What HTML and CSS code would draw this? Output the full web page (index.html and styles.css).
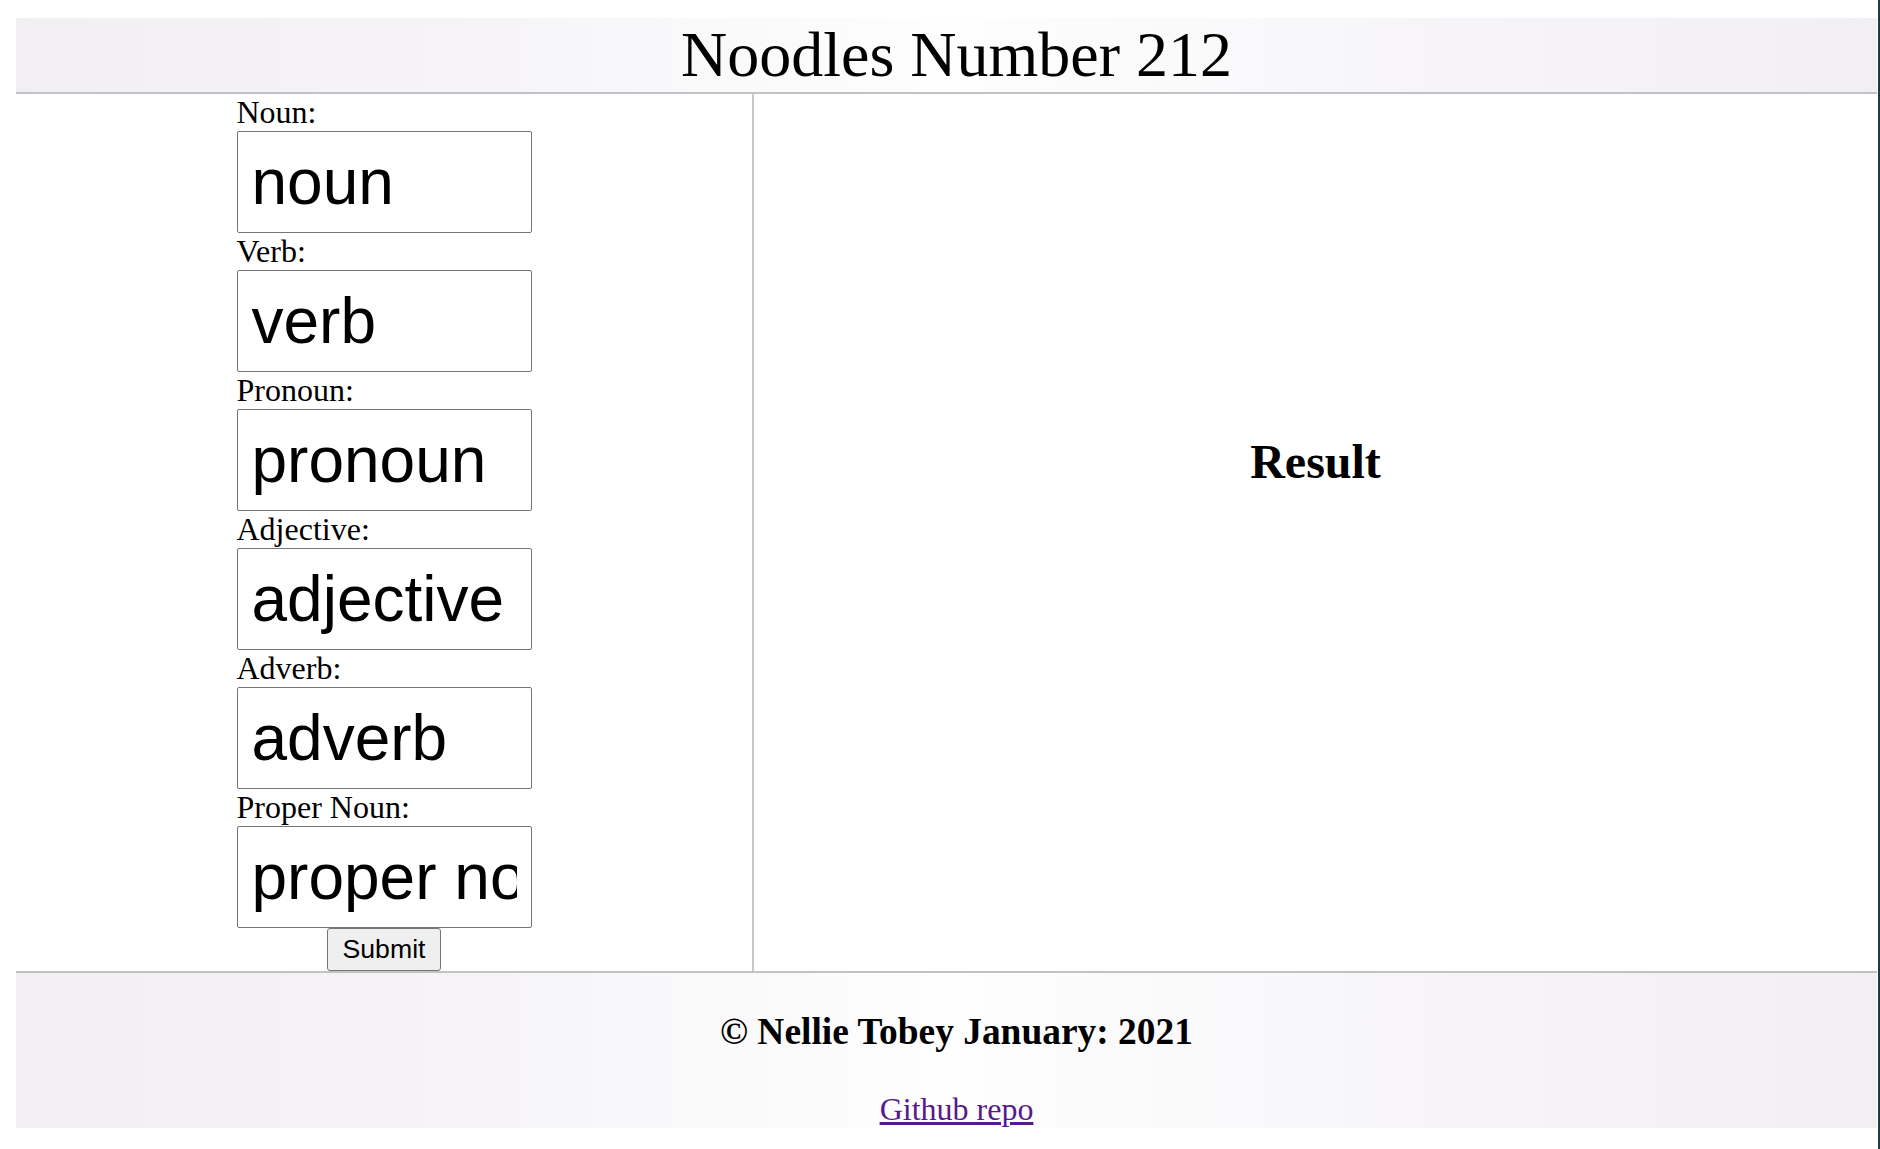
FILE: index.html
```html
<!DOCTYPE html>
<html lang="en">
<head>
<meta charset="utf-8">
<title>Noodles Number 212</title>
<link rel="stylesheet" href="styles.css">
</head>
<body>
<header class="site-header">
  <h1 class="title">Noodles Number 212</h1>
</header>
<main class="main">
  <section class="left">
    <form class="form" onsubmit="return false;">
      <label class="label" for="noun">Noun:</label>
      <input class="field" id="noun" type="text" value="noun">
      <label class="label" for="verb">Verb:</label>
      <input class="field" id="verb" type="text" value="verb">
      <label class="label" for="pronoun">Pronoun:</label>
      <input class="field" id="pronoun" type="text" value="pronoun">
      <label class="label" for="adjective">Adjective:</label>
      <input class="field" id="adjective" type="text" value="adjective">
      <label class="label" for="adverb">Adverb:</label>
      <input class="field" id="adverb" type="text" value="adverb">
      <label class="label" for="proper">Proper Noun:</label>
      <input class="field" id="proper" type="text" value="proper noun">
      <button class="submit" type="submit">Submit</button>
    </form>
  </section>
  <section class="right">
    <h2 class="result">Result</h2>
  </section>
</main>
<footer class="site-footer">
  <h3 class="copy">© Nellie Tobey January: 2021</h3>
  <div class="links"><a class="repo" href="#">Github repo</a></div>
</footer>
</body>
</html>
```
FILE: styles.css
```css
html {
  background: linear-gradient(to right, #ffffff calc(100% - 2px), #1e3b42 calc(100% - 2px));
  min-height: 100%;
}

body {
  margin: 18px 3px 0 16px;
  font-family: "Liberation Serif", "Times New Roman", serif;
  font-size: 32px;
  color: #000;
}

.site-header,
.site-footer {
  background: linear-gradient(to right, #f2eff3 0%, #f6f4f7 25%, #fefefe 50%, #f7f5f8 75%, #f2eff4 100%);
  padding-left: 20px;
  text-align: center;
}

.site-header {
  border-bottom: 2px solid #c2c1c5;
}

.title {
  margin: 0;
  font-size: 64px;
  font-weight: normal;
  line-height: normal;
}

.main {
  display: flex;
}

.left {
  width: 736px;
  border-right: 2px solid #c8c8c8;
  display: flex;
  justify-content: center;
}

.form {
  width: 295px;
  display: flex;
  flex-direction: column;
  margin: 0;
}

.label {
  display: block;
  font-size: 32px;
  line-height: normal;
  height: 37px;
}

.field {
  display: block;
  box-sizing: border-box;
  width: 295px;
  height: 102px;
  margin: 0;
  padding: 0 14px;
  border: 1px solid #767676;
  border-radius: 2px;
  font-family: "Liberation Sans", Arial, sans-serif;
  font-size: 64px;
  color: #000;
  background: #fff;
  outline: none;
}

.submit {
  align-self: center;
  box-sizing: border-box;
  height: 43px;
  margin: 0;
  padding: 0 15px;
  border: 1px solid #767676;
  border-radius: 3px;
  background: #efefef;
  font-family: "Liberation Sans", Arial, sans-serif;
  font-size: 26.67px;
  color: #000;
}

.right {
  flex: 1;
  text-align: center;
  padding-top: 340px;
}

.result {
  margin: 0;
  font-size: 48px;
  font-weight: bold;
  line-height: normal;
}

.site-footer {
  border-top: 2px solid #c2c2c2;
}

.copy {
  margin: 37.44px 0;
  font-size: 37.44px;
  font-weight: bold;
  line-height: normal;
}

.links {
  line-height: normal;
}

.repo {
  color: #551a8b;
  text-decoration: underline;
}
```
